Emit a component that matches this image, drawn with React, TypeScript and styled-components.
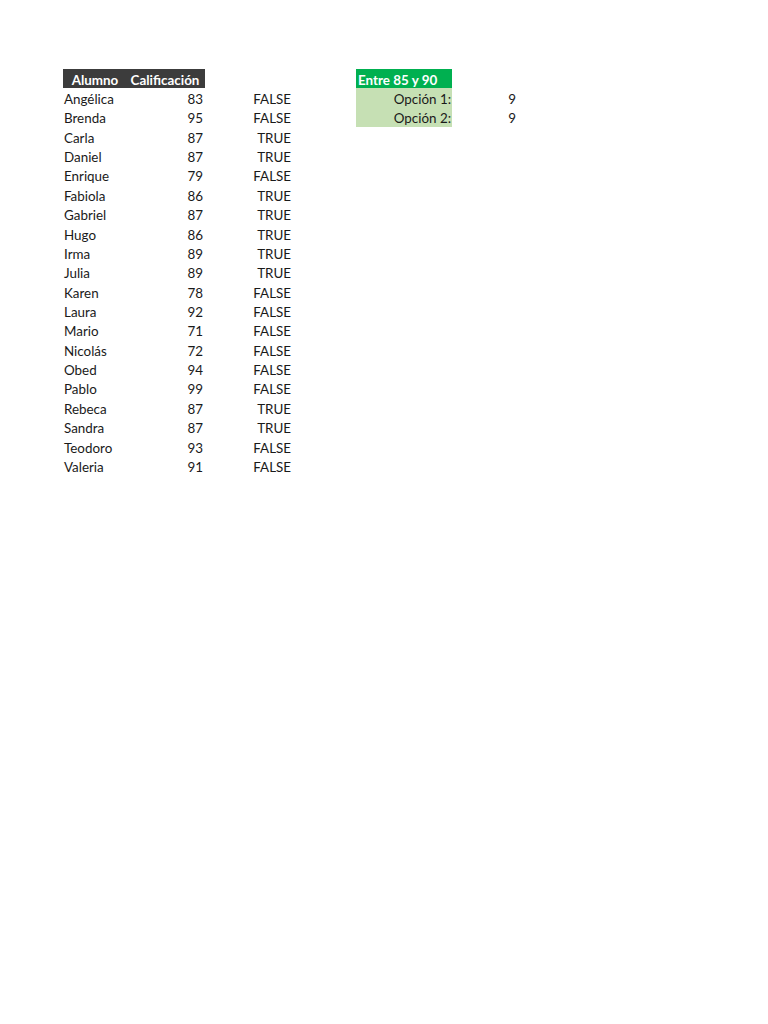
import React from "react";
import styled, { createGlobalStyle } from "styled-components";

const Global = createGlobalStyle`
  html, body { margin: 0; padding: 0; background: #fff; }
  body { font-family: Lato, "Open Sans", "Liberation Sans", sans-serif; }
`;

const Sheet = styled.div`
  display: grid;
  grid-template-columns: 62px 80px 88px 63px 96px 64px;
  grid-auto-rows: 19.37px;
  padding: 69px 0 0 63px;
  font-size: 13.4px;
  color: #1a1a1a;
`;

const Cell = styled.div<{ $align?: "left" | "right" | "center"; $bg?: string; $color?: string; $pad?: number }>`
  box-sizing: border-box;
  display: flex;
  align-items: center;
  justify-content: ${(p) => (p.$align === "right" ? "flex-end" : p.$align === "center" ? "center" : "flex-start")};
  padding: 2px ${(p) => p.$pad ?? 1}px 0;
  background: ${(p) => p.$bg ?? "transparent"};
  color: ${(p) => p.$color ?? "#1a1a1a"};
  white-space: nowrap;
  overflow: visible;
`;

const HeadCell = styled(Cell)`
  background: #3c3c3c;
  color: #fff;
  font-weight: 700;
`;

const RangeTitle = styled(Cell)`
  background: #00b050;
  color: #fff;
  font-weight: 700;
`;

const data: [string, number][] = [
  ["Angélica", 83], ["Brenda", 95], ["Carla", 87], ["Daniel", 87], ["Enrique", 79],
  ["Fabiola", 86], ["Gabriel", 87], ["Hugo", 86], ["Irma", 89], ["Julia", 89],
  ["Karen", 78], ["Laura", 92], ["Mario", 71], ["Nicolás", 72], ["Obed", 94],
  ["Pablo", 99], ["Rebeca", 87], ["Sandra", 87], ["Teodoro", 93], ["Valeria", 91],
];

export default function App() {
  const rows: React.ReactNode[] = [];
  rows.push(
    <HeadCell key="h1" $align="center" style={{ paddingLeft: 3 }}>Alumno</HeadCell>,
    <HeadCell key="h2" $align="center">Calificación</HeadCell>,
    <Cell key="h3" />,
    <Cell key="h4" />,
    <RangeTitle key="h5" $pad={2}>Entre 85 y 90</RangeTitle>,
    <Cell key="h6" />
  );
  data.forEach(([n, g], i) => {
    const ok = g >= 85 && g <= 90;
    rows.push(
      <Cell key={`a${i}`}>{n}</Cell>,
      <Cell key={`b${i}`} $align="right" $pad={2}>{g}</Cell>,
      <Cell key={`c${i}`} $align="right" $pad={2}>{ok ? "TRUE" : "FALSE"}</Cell>,
      <Cell key={`d${i}`} />,
      i < 2 ? (
        <Cell key={`e${i}`} $align="right" $bg="#c6e0b4" $pad={1}>{`Opción ${i + 1}:`}</Cell>
      ) : (
        <Cell key={`e${i}`} />
      ),
      i < 2 ? (
        <Cell key={`f${i}`} $align="right" $pad={0}>9</Cell>
      ) : (
        <Cell key={`f${i}`} />
      )
    );
  });
  return (
    <>
      <Global />
      <Sheet>{rows}</Sheet>
    </>
  );
}
